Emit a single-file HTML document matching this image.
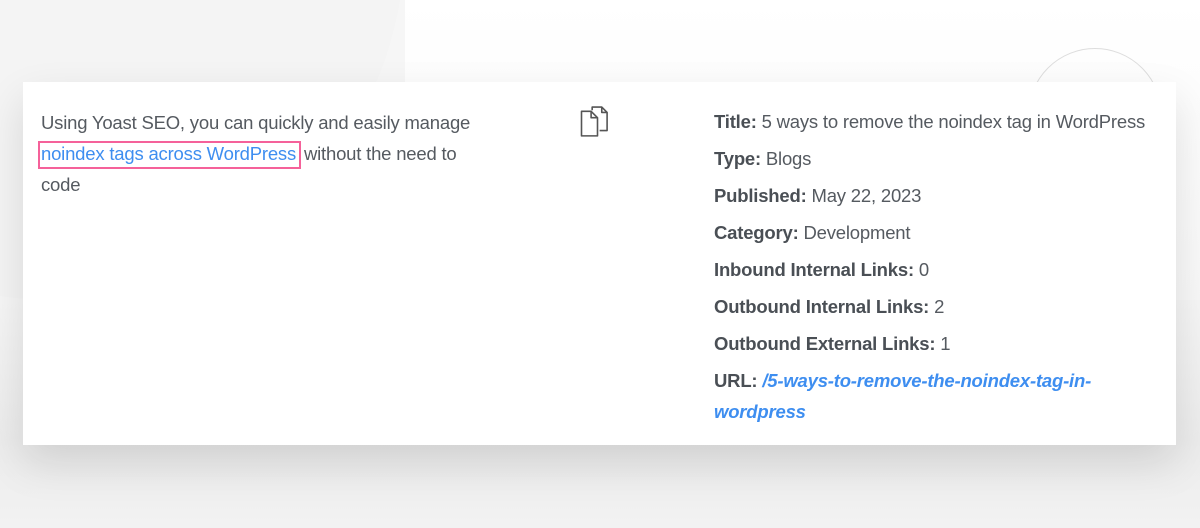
<!DOCTYPE html>
<html><head><style>
html,body{margin:0;padding:0}
body{width:1200px;height:528px;overflow:hidden;position:relative;background:linear-gradient(#f6f6f6,#f6f6f6 300px,#ececec 440px,#f2f2f2 528px);font-family:"Liberation Sans",sans-serif;color:#555a60}
.c1{position:absolute;left:-300px;top:-420px;width:705px;height:720px;border-radius:50%;background:#f4f4f4}
.top{position:absolute;left:405px;top:0;width:795px;height:300px;background:linear-gradient(#fff,#f8f8f8)}
.c2{position:absolute;left:1028px;top:48px;width:132px;height:132px;border-radius:50%;border:1px solid #ddd}
.card{position:absolute;left:23px;top:82px;width:1153px;height:363px;background:#fff;box-shadow:0 18px 40px rgba(0,0,0,.12)}
.left{position:absolute;left:18px;top:25px;width:520px;font-size:18.5px;line-height:31px;letter-spacing:-0.2px;white-space:nowrap}
.left a{color:#3e8ef0;text-decoration:none;outline:2.5px solid #f5619a;padding:0 3px 3px 1px;margin-left:-1px}
.right{position:absolute;left:691px;top:21px;width:460px;font-size:18.5px;line-height:37px;letter-spacing:-0.2px;white-space:nowrap}
.right b{color:#4a4f55}
.url{color:#3e8ef0;font-weight:bold;font-style:italic}
</style></head><body>
<div class="c1"></div><div class="top"></div><div class="c2"></div>
<div class="card">
<svg style="position:absolute;left:557px;top:24px" width="35" height="32" viewBox="0 0 32 30" fill="none" stroke="#555" stroke-width="1.5" stroke-linejoin="round">
<path d="M11 4V1H20L25 6V23H18"/><path d="M20 1V6H25"/><path d="M1 5H10L16 11V28H1Z"/><path d="M10 5V11H16"/>
</svg>
<div class="left">Using Yoast SEO, you can quickly and easily manage<br><a>noindex tags across WordPress</a> without the need to<br>code</div>
<div class="right">
<div><b>Title:</b> 5 ways to remove the noindex tag in WordPress</div>
<div><b>Type:</b> Blogs</div>
<div><b>Published:</b> May 22, 2023</div>
<div><b>Category:</b> Development</div>
<div><b>Inbound Internal Links:</b> 0</div>
<div><b>Outbound Internal Links:</b> 2</div>
<div><b>Outbound External Links:</b> 1</div>
<div style="line-height:31px;margin-top:3px"><b>URL:</b> <span class="url">/5-ways-to-remove-the-noindex-tag-in-<br>wordpress</span></div>
</div>
</div>
</body></html>
